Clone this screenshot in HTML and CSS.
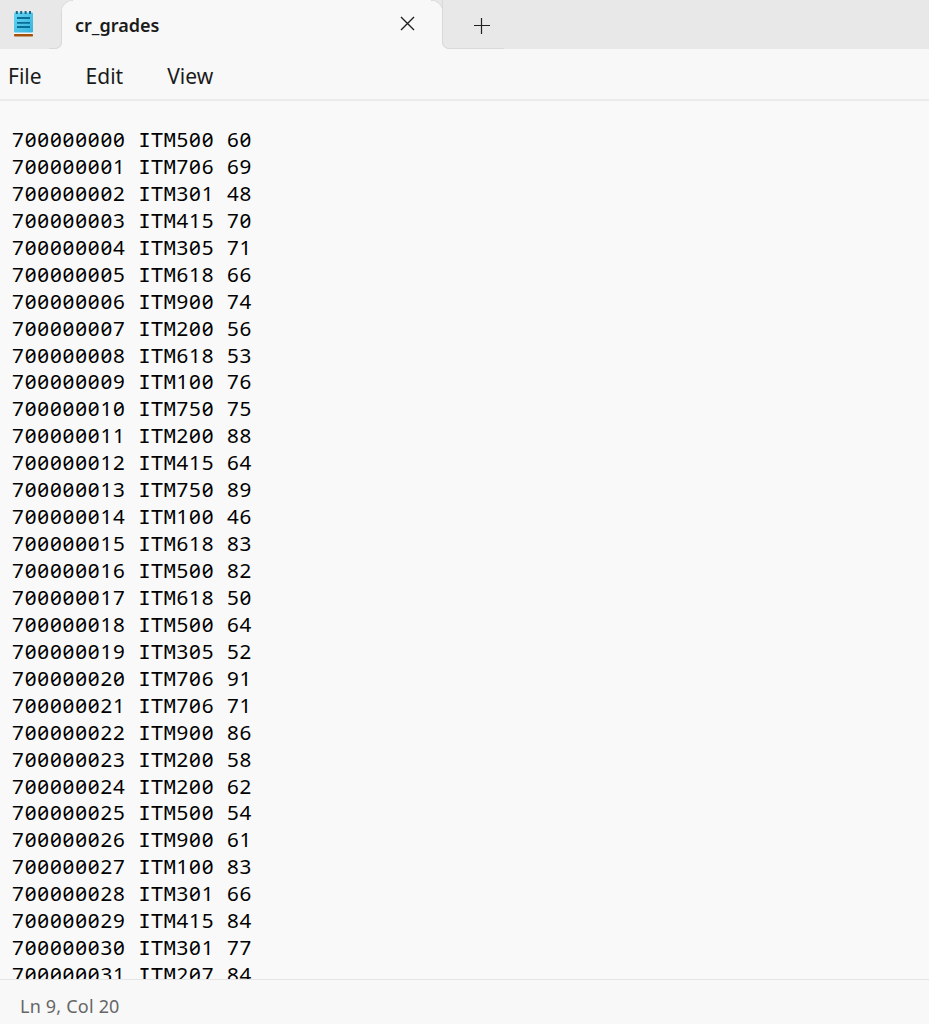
FILE: index.html
```html
<!DOCTYPE html>
<html lang="en">
<head>
    <meta charset="UTF-8">
    <meta name="viewport" content="width=device-width, initial-scale=1.0">
    <title>cr_grades</title>
    <link rel="stylesheet" href="styles.css">
</head>
<body>

    <!-- Title bar with tabs -->
    <header class="titlebar">
        <div class="app-icon">
            <svg width="22" height="28" viewBox="0 0 22 28">
                <defs>
                    <linearGradient id="page" x1="0" y1="0" x2="1" y2="1">
                        <stop offset="0" stop-color="#65d5f2"/>
                        <stop offset="1" stop-color="#35b3dc"/>
                    </linearGradient>
                </defs>
                <rect x="1" y="22" width="19" height="2" fill="#f4f4f4"/>
                <rect x="1" y="24" width="19" height="2.5" rx="0.8" fill="#a4510c"/>
                <rect x="1" y="2.5" width="19" height="20" rx="1" fill="url(#page)"/>
                <path d="M3.8 1v3M8.2 1v3M12.6 1v3M17 1v3" stroke="#17698a" stroke-width="2"/>
                <path d="M4 8h13M4 12.8h13M4 17h13" stroke="#086d97" stroke-width="1.8"/>
            </svg>
            <div class="edge-left"></div>
        </div>
        <div class="tab">
            <span class="tab-title">cr_grades</span>
            <svg class="tab-close" width="15" height="15" viewBox="0 0 15 15">
                <path d="M1 1l13 13M14 1L1 14" stroke="#1f1f1f" stroke-width="1.4"/>
            </svg>
        </div>
        <div class="new-tab">
            <div class="edge-right">
                <svg width="16" height="16" viewBox="0 0 16 16">
                    <path d="M0 7.5h16M7.5 0v16" stroke="#1f1f1f" stroke-width="1.2"/>
                </svg>
            </div>
        </div>
    </header>

    <!-- Menu -->
    <nav class="menu">
        <span class="menu-item">File</span>
        <span class="menu-item">Edit</span>
        <span class="menu-item">View</span>
    </nav>

    <!-- Document text -->
    <main class="editor">
<pre class="text">700000000 <span>ITM</span>500 60
700000001 <span>ITM</span>706 69
700000002 <span>ITM</span>301 48
700000003 <span>ITM</span>415 70
700000004 <span>ITM</span>305 71
700000005 <span>ITM</span>618 66
700000006 <span>ITM</span>900 74
700000007 <span>ITM</span>200 56
700000008 <span>ITM</span>618 53
700000009 <span>ITM</span>100 76
700000010 <span>ITM</span>750 75
700000011 <span>ITM</span>200 88
700000012 <span>ITM</span>415 64
700000013 <span>ITM</span>750 89
700000014 <span>ITM</span>100 46
700000015 <span>ITM</span>618 83
700000016 <span>ITM</span>500 82
700000017 <span>ITM</span>618 50
700000018 <span>ITM</span>500 64
700000019 <span>ITM</span>305 52
700000020 <span>ITM</span>706 91
700000021 <span>ITM</span>706 71
700000022 <span>ITM</span>900 86
700000023 <span>ITM</span>200 58
700000024 <span>ITM</span>200 62
700000025 <span>ITM</span>500 54
700000026 <span>ITM</span>900 61
700000027 <span>ITM</span>100 83
700000028 <span>ITM</span>301 66
700000029 <span>ITM</span>415 84
700000030 <span>ITM</span>301 77
700000031 <span>ITM</span>207 84</pre>
    </main>

    <footer class="statusbar">Ln 9, Col 20</footer>

</body>
</html>
```
FILE: styles.css
```css
body {
    margin: 0;
    height: 1024px;
    display: flex;
    flex-direction: column;
    overflow: hidden;
    background-color: #f8f8f8;
    font-family: "Noto Sans", "Open Sans", sans-serif;
    color: #1b1b1b;
}

/* Title bar */
.titlebar {
    display: flex;
    flex: none;
    height: 49px;
    background-color: #f8f8f8;
}

.app-icon {
    box-sizing: border-box;
    width: 62px;
    display: flex;
    justify-content: space-between;
    padding-left: 13px;
    background-color: #e8e8e8;
    border-bottom-right-radius: 7px;
}

.app-icon svg {
    margin-top: 10px;
}

/* Outline of the active tab on both sides */
.edge-left {
    box-sizing: border-box;
    width: 13px;
    border-right: 1px solid #d9d9d9;
    border-bottom: 1px solid #d9d9d9;
    border-bottom-right-radius: 7px;
}

.edge-right {
    box-sizing: border-box;
    width: 62px;
    height: 49px;
    padding: 17px 0 0 31px;
    border-left: 1px solid #d9d9d9;
    border-bottom: 1px solid #d9d9d9;
    border-bottom-left-radius: 7px;
}

.tab {
    box-sizing: border-box;
    width: 380px;
    display: flex;
    justify-content: space-between;
    padding: 0 27px 0 13px;
    margin: 0 -1px;
    border: 0 solid transparent;
    border-width: 0 1px;
    width: 382px;
    background:
        radial-gradient(circle at 100% 100%, transparent 11px, #dcdcdc 11.5px, #e8e8e8 12.5px) top left / 12px 12px no-repeat border-box,
        radial-gradient(circle at 0 100%, transparent 11px, #dcdcdc 11.5px, #e8e8e8 12.5px) top right / 12px 12px no-repeat border-box;
}

.tab-title {
    font-size: 18px;
    font-weight: 600;
    line-height: 50px;
}

.tab-close {
    margin-top: 16px;
}

.new-tab {
    flex: 1;
    background-color: #e8e8e8;
    border-bottom-left-radius: 7px;
}

/* Menu */
.menu {
    box-sizing: border-box;
    flex: none;
    height: 52px;
    display: flex;
    gap: 44px;
    padding-left: 8px;
    border-bottom: 2px solid #ebebeb;
    font-size: 21px;
    line-height: 54px;
}

/* Editor */
.editor {
    flex: 1;
    min-height: 0;
    overflow: hidden;
    padding: 25px 0 0 12px;
    background-color: #f9f9f9;
}

.text {
    margin: 0;
    font-family: "Noto Sans", sans-serif;
    font-size: 20.6px;
    font-feature-settings: "zero";
    letter-spacing: 0.86px;
    word-spacing: 6.44px;
    line-height: 26.93px;
    color: #000;
}

.text span {
    font-family: "DejaVu Sans Mono", monospace;
    font-size: 20px;
    letter-spacing: 0.61px;
    line-height: 1;
}

/* Status bar */
.statusbar {
    box-sizing: border-box;
    flex: none;
    height: 45px;
    padding-left: 20px;
    border-top: 1px solid #e5e5e5;
    font-size: 18px;
    letter-spacing: 0.2px;
    line-height: 53px;
    color: #666;
}
```
